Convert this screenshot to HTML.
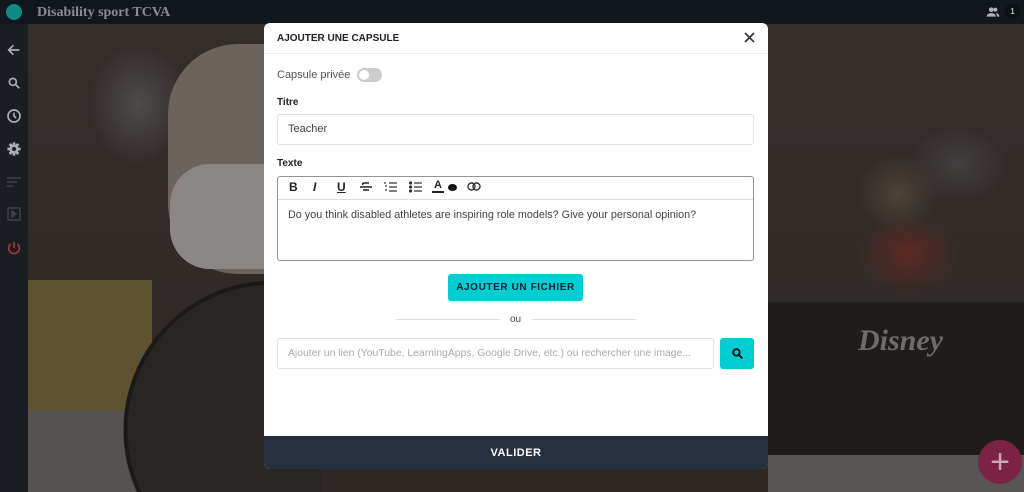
<!DOCTYPE html>
<html><head><meta charset="utf-8"><style>
*{box-sizing:border-box;margin:0;padding:0}
html,body{width:1024px;height:492px;overflow:hidden}
body{background:#2b2724;font-family:"Liberation Sans",sans-serif;position:relative}
.abs{position:absolute}
.top{left:0;top:0;width:1024px;height:24px;background:#12161d}
.side{left:0;top:24px;width:28px;height:468px;background:#1a1d22}
.modal{left:264px;top:23px;width:504px;height:446px;background:#fff;border-radius:6px;overflow:hidden}
.lbl{font-size:10px;font-weight:bold;color:#222}
.inp{border:1px solid #e3e3e3;border-radius:3px;background:#fff}
</style></head><body>
<div class="abs" style="left:28px;top:24px;width:996px;height:468px;overflow:hidden;background:
radial-gradient(ellipse 50px 40px at 880px 230px,#5e2a22,transparent),
radial-gradient(ellipse 50px 60px at 110px 80px,#4d4a4a,transparent),
radial-gradient(ellipse 40px 40px at 870px 170px,#4e4236,transparent),
radial-gradient(ellipse 50px 40px at 930px 140px,#423f40,transparent),
linear-gradient(#342e2b,#2e2825)">
<div class="abs" style="left:0;top:256px;width:124px;height:130px;background:#5e5230"></div>
<div class="abs" style="left:0;top:386px;width:236px;height:82px;background:#55524f"></div>
<div class="abs" style="left:740px;top:278px;width:256px;height:155px;background:#1f1d1c"></div>
<div class="abs" style="left:740px;top:431px;width:256px;height:37px;background:#585654"></div>
<div class="abs" style="left:95px;top:256px;width:200px;height:212px;background:radial-gradient(circle 150px at 150px 150px,#282624 145px,#1a1918 146px,#1a1918 149px,transparent 150px)"></div>
<div class="abs" style="left:140px;top:20px;width:120px;height:230px;border-radius:70px 0 0 70px;background:#6e625c"></div>
<div class="abs" style="left:142px;top:140px;width:110px;height:105px;border-radius:40px 0 0 40px;background:#8a8784"></div>
<div class="abs" style="left:830px;top:300px;color:#6e6b69;font:italic bold 30px 'Liberation Serif',serif">Disney</div>
</div>

<div class="abs top"></div>
<div class="abs" style="left:6px;top:4px;width:16px;height:16px;border-radius:50%;background:#0e8a86"></div>
<div class="abs" style="left:37px;top:5px;font:bold 14px 'Liberation Serif',serif;color:#8a8c90">Disability sport TCVA</div>
<svg class="abs" style="left:985px;top:5px" width="16" height="14" viewBox="0 0 24 24" fill="#aeb1b5"><circle cx="9" cy="8" r="4"/><path d="M1 20c0-4 4-6 8-6s8 2 8 6z"/><circle cx="16" cy="8" r="3.5"/><path d="M17 14c3 0 6 2 6 6h-4c0-2-1-4-2-6z"/></svg>
<div class="abs" style="left:1005px;top:4px;width:15px;height:15px;border-radius:50%;background:#08110f;color:#bbb;font-size:8px;font-weight:bold;text-align:center;line-height:15px">1</div>

<div class="abs side"></div>
<svg class="abs" style="left:6px;top:42px" width="16" height="16" viewBox="0 0 24 24" fill="none" stroke="#a9acb0" stroke-width="2.5"><path d="M20 12H5M11 5l-7 7 7 7"/></svg>
<svg class="abs" style="left:7px;top:76px" width="14" height="14" viewBox="0 0 24 24" fill="none" stroke="#a9acb0" stroke-width="3"><circle cx="10" cy="10" r="6"/><path d="M15 15l6 6"/></svg>
<svg class="abs" style="left:6px;top:108px" width="16" height="16" viewBox="0 0 24 24" fill="none" stroke="#a9acb0" stroke-width="2.5"><circle cx="12" cy="12" r="9"/><path d="M12 7v5l3 3"/></svg>
<svg class="abs" style="left:6px;top:141px" width="16" height="16" viewBox="0 0 24 24" fill="#a9acb0"><circle cx="12" cy="12" r="7"/><path d="M10 2h4v4h-4zM10 18h4v4h-4zM2 10h4v4H2zM18 10h4v4h-4zM4 6l3-3 3 3-3 3zM14 18l3-3 3 3-3 3zM4 18l3 3 3-3-3-3zM14 6l3 3 3-3-3-3z"/><circle cx="12" cy="12" r="3" fill="#1a1d22"/></svg>
<svg class="abs" style="left:7px;top:176px" width="14" height="12" viewBox="0 0 14 12" stroke="#3e4146" stroke-width="1.5"><path d="M0 2h14M0 6h10M0 10h6"/></svg>
<svg class="abs" style="left:7px;top:207px" width="14" height="14" viewBox="0 0 14 14" fill="none" stroke="#3e4146" stroke-width="1.5"><rect x="1" y="1" width="12" height="12"/><path d="M5 4l4 3-4 3z" fill="#3e4146"/></svg>
<svg class="abs" style="left:6px;top:240px" width="16" height="16" viewBox="0 0 24 24" fill="none" stroke="#a33535" stroke-width="2.5"><path d="M12 3v9M7 6a8 8 0 1 0 10 0"/></svg>

<div class="abs" style="left:978px;top:440px;width:44px;height:44px;border-radius:50%;background:#7c2245"></div>
<div class="abs" style="left:978px;top:440px;width:44px;height:44px;color:#c9a8b4;font-size:34px;text-align:center;line-height:44px">+</div>

<div class="abs modal">
  <div class="abs" style="left:0;top:0;width:504px;height:31px;border-bottom:1px solid #eee"></div>
  <div class="abs lbl" style="left:13px;top:10px;font-size:10px">AJOUTER UNE CAPSULE</div>
  <svg class="abs" style="left:480px;top:9px" width="11" height="11" viewBox="0 0 11 11" stroke="#333" stroke-width="1.6"><path d="M1 1l9 9M10 1l-9 9"/></svg>
  <div class="abs" style="left:13px;top:46px;font-size:11px;color:#555">Capsule privée</div>
  <div class="abs" style="left:93px;top:45px;width:25px;height:14px;border-radius:7px;background:#ccc"></div>
  <div class="abs" style="left:95px;top:47px;width:10px;height:10px;border-radius:50%;background:#fff"></div>
  <div class="abs lbl" style="left:13px;top:74px">Titre</div>
  <div class="abs inp" style="left:13px;top:91px;width:477px;height:31px"></div>
  <div class="abs" style="left:24px;top:100px;font-size:11px;color:#444">Teacher</div>
  <div class="abs lbl" style="left:13px;top:135px">Texte</div>
  <div class="abs" style="left:13px;top:153px;width:477px;height:85px;border:1px solid #8c9595;border-radius:3px"></div>
  <div class="abs" style="left:14px;top:176px;width:475px;height:1px;background:#ddd"></div>
  <div class="abs" style="left:25px;top:157px;font-size:12px;font-weight:bold;color:#222">B</div>
  <div class="abs" style="left:49px;top:157px;font-size:12px;font-weight:bold;font-style:italic;color:#222">I</div>
  <div class="abs" style="left:73px;top:157px;font-size:12px;font-weight:bold;text-decoration:underline;color:#222">U</div>
  <svg class="abs" style="left:96px;top:158px" width="12" height="12" viewBox="0 0 12 12" stroke="#222" stroke-width="1.5" fill="none"><path d="M0 6h12M9 2H4Q2 2 3 4M3 9h6"/></svg>
  <svg class="abs" style="left:120px;top:158px" width="13" height="12" viewBox="0 0 13 12" stroke="#333" stroke-width="1.2"><path d="M5 2h8M5 6h8M5 10h8M1 1v2M1 5h2M1 9h2"/></svg>
  <svg class="abs" style="left:145px;top:158px" width="13" height="12" viewBox="0 0 13 12" stroke="#333" stroke-width="1.2"><path d="M5 2h8M5 6h8M5 10h8"/><circle cx="1.5" cy="2" r="1" fill="#333"/><circle cx="1.5" cy="6" r="1" fill="#333"/><circle cx="1.5" cy="10" r="1" fill="#333"/></svg>
  <div class="abs" style="left:168px;top:157px;font-size:11px;font-weight:bold;color:#222;border-bottom:2px solid #222;line-height:11px;width:12px;text-align:center">A</div>
  <div class="abs" style="left:184px;top:161px;width:9px;height:7px;border-radius:50%;background:#111"></div>
  <svg class="abs" style="left:203px;top:159px" width="14" height="9" viewBox="0 0 14 9" fill="none" stroke="#333" stroke-width="1.4"><rect x="1" y="1" width="7" height="7" rx="3.5"/><rect x="6" y="1" width="7" height="7" rx="3.5"/></svg>
  <div class="abs" style="left:24px;top:186px;font-size:10.8px;color:#444;white-space:nowrap">Do you think disabled athletes are inspiring role models? Give your personal opinion?</div>
  <div class="abs" style="left:184px;top:251px;width:135px;height:27px;background:#00cdd1;border-radius:3px;font-size:10px;font-weight:bold;letter-spacing:.6px;color:#123;text-align:center;line-height:27px">AJOUTER UN FICHIER</div>
  <div class="abs" style="left:132px;top:296px;width:104px;height:1px;background:#ddd"></div>
  <div class="abs" style="left:268px;top:296px;width:104px;height:1px;background:#ddd"></div>
  <div class="abs" style="left:246px;top:291px;font-size:10px;color:#444">ou</div>
  <div class="abs inp" style="left:13px;top:315px;width:437px;height:31px"></div>
  <div class="abs" style="left:24px;top:325px;font-size:10.4px;color:#aaa;white-space:nowrap">Ajouter un lien (YouTube, LearningApps, Google Drive, etc.) ou rechercher une image...</div>
  <div class="abs" style="left:456px;top:315px;width:34px;height:31px;background:#00cdd1;border-radius:3px"></div>
  <svg class="abs" style="left:467px;top:324px" width="13" height="13" viewBox="0 0 24 24" fill="none" stroke="#111" stroke-width="3.5"><circle cx="10" cy="10" r="6"/><path d="M15 15l6 6"/></svg>
  <div class="abs" style="left:0;top:413px;width:504px;height:33px;background:#252f3e;color:#fff;font-size:11px;font-weight:bold;letter-spacing:.5px;text-align:center;line-height:34px">VALIDER</div>
</div>
</body></html>
